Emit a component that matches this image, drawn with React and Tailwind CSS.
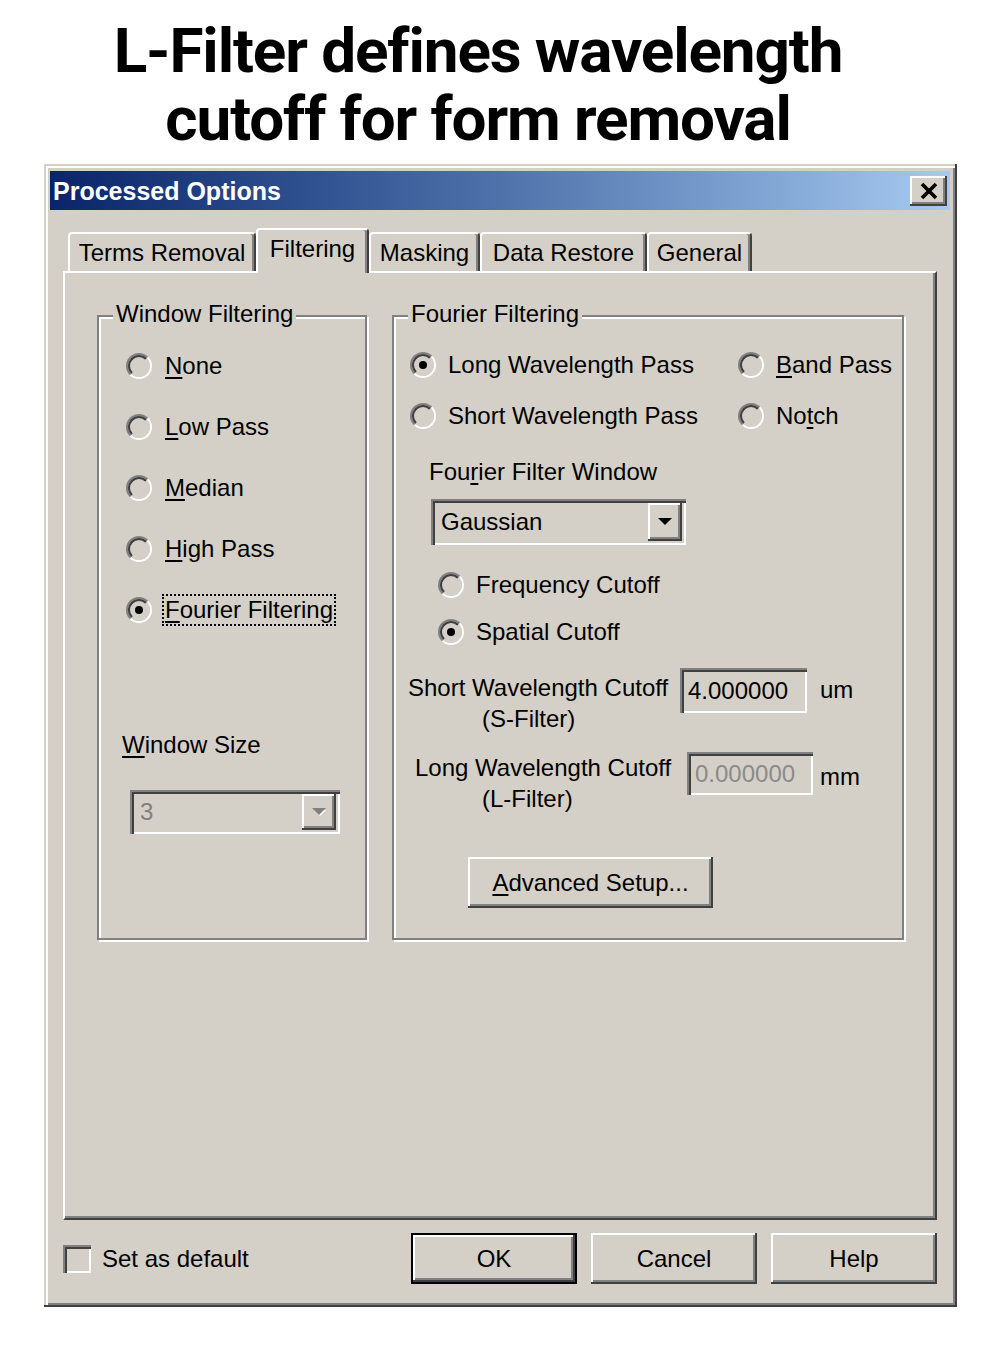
const ui = "font-['Liberation_Sans',Arial,sans-serif] text-[24px] leading-[28px] text-black";
const raised = "shadow-[inset_-2px_-2px_0_#404040,inset_2px_2px_0_#ffffff,inset_-4px_-4px_0_#808080]";
const sunken = "shadow-[inset_2px_2px_0_#808080,inset_4px_4px_0_#404040,inset_-2px_-2px_0_#ffffff,inset_-4px_-4px_0_#d4d0c8]";

function Radio({ checked }) {
  return (
    <span className="flex h-[26px] w-[26px] shrink-0 rounded-full border-2 border-t-[#808080] border-l-[#808080] border-b-white border-r-white">
      <span className="flex h-full w-full items-center justify-center rounded-full border-2 border-t-[#404040] border-l-[#404040] border-b-[#d4d0c8] border-r-[#d4d0c8] bg-[#d4d0c8]">
        {checked && <span className="h-[8px] w-[8px] rounded-full bg-black" />}
      </span>
    </span>
  );
}

function U({ children }) {
  return <span className="underline decoration-[2px] underline-offset-[3px]">{children}</span>;
}

function Arrow({ disabled }) {
  return (
    <svg width="16" height="10" viewBox="0 0 16 10">
      {disabled && <path d="M3 3h12l-6 6z" fill="#ffffff" />}
      <path d="M1 1h14l-7 7z" fill={disabled ? "#808080" : "#000000"} />
    </svg>
  );
}

function Combo({ value, disabled, className }) {
  return (
    <div className={`flex bg-[#d4d0c8] p-[4px] ${sunken} ${className}`}>
      <div className={`flex flex-1 items-center pl-[6px] ${disabled ? "text-[#808080]" : "text-black"}`}>{value}</div>
      <div className={`flex w-[34px] items-center justify-center bg-[#d4d0c8] ${raised}`}>
        <Arrow disabled={disabled} />
      </div>
    </div>
  );
}

function Button({ children, className, isDefault }) {
  return (
    <div className={`${isDefault ? "border-2 border-black" : ""} ${className}`}>
      <div className={`flex h-full w-full items-center justify-center bg-[#d4d0c8] ${raised}`}>{children}</div>
    </div>
  );
}

function Tab({ label, w, active }) {
  if (active) {
    return (
      <div className={`relative z-10 -mb-[2px] flex h-[45px] ${w} justify-center rounded-t-[4px] border-t-2 border-l-2 border-r-2 border-t-white border-l-white border-r-[#404040] bg-[#d4d0c8] pt-[5px] shadow-[inset_-2px_0_0_#808080]`}>
        {label}
      </div>
    );
  }
  return (
    <div className={`flex h-[39px] ${w} justify-center rounded-t-[4px] border-t-2 border-l-2 border-r-2 border-t-white border-l-white border-r-[#404040] bg-[#d4d0c8] pt-[5px] shadow-[inset_-2px_0_0_#808080]`}>
      {label}
    </div>
  );
}

function Group({ title, className, children }) {
  return (
    <div className={`relative border-2 border-[#808080] shadow-[2px_2px_0_#ffffff,inset_2px_2px_0_#ffffff] ${className}`}>
      <span className="absolute left-[14px] top-[-17px] bg-[#d4d0c8] px-[3px] leading-[28px]">{title}</span>
      {children}
    </div>
  );
}

function LeftRadio({ checked, focus, children }) {
  return (
    <div className="flex items-center">
      <Radio checked={checked} />
      <span className={`ml-[10px] border-2 px-[1px] ${focus ? "border-dotted border-black" : "border-transparent"}`}>{children}</span>
    </div>
  );
}

function RightRadio({ checked, children, className }) {
  return (
    <div className={`flex items-center ${className}`}>
      <Radio checked={checked} />
      <span className="ml-[12px]">{children}</span>
    </div>
  );
}

export default function App() {
  return (
    <div className="min-h-[1362px] w-[1000px] bg-white">
      <div className="w-[956px] pt-[17px] pb-[11px] text-center font-['Roboto',sans-serif] text-[62px] font-bold leading-[68px] tracking-[-1.1px] text-black">
        <div>L-Filter defines wavelength</div>
        <div>cutoff for form removal</div>
      </div>

      <div className={`ml-[44px] h-[1143px] w-[913px] bg-[#d4d0c8] pt-[7px] pl-[6px] pr-[7px] ${ui} shadow-[inset_-2px_-2px_0_#404040,inset_2px_2px_0_#d4d0c8,inset_4px_4px_0_#ffffff,inset_-4px_-4px_0_#808080]`}>
        {/* title bar */}
        <div className="flex h-[39px] items-center justify-between bg-linear-to-r from-[#0a246a] via-[#4f72ab] to-[#a6caf0] pl-[3px] pr-[3px]">
          <span className="text-[25px] font-bold text-white">Processed Options</span>
          <div className={`flex h-[30px] w-[37px] items-center justify-center bg-[#d4d0c8] ${raised}`}>
            <svg width="20" height="18" viewBox="0 0 20 18">
              <path d="M3 2l14 14M17 2L3 16" stroke="#000000" strokeWidth="3.6" />
            </svg>
          </div>
        </div>

        <div className="mx-[13px] mt-[18px]">
          {/* tabs */}
          <div className="flex h-[43px] items-end pl-[5px]">
            <Tab label="Terms Removal" w="w-[188px]" />
            <Tab label="Filtering" w="w-[113px]" active />
            <Tab label="Masking" w="w-[111px]" />
            <Tab label="Data Restore" w="w-[167px]" />
            <Tab label="General" w="w-[105px]" />
          </div>

          {/* tab panel */}
          <div className="flex h-[949px] gap-[25px] border-t-2 border-l-2 border-r-2 border-b-2 border-t-white border-l-white border-r-[#404040] border-b-[#404040] pt-[42px] pl-[32px] shadow-[inset_-2px_-2px_0_#808080]">
            <Group title="Window Filtering" className="h-[625px] w-[270px]">
              <div className="ml-[27px] mt-[33px] flex flex-col gap-[29px]">
                <LeftRadio><U>N</U>one</LeftRadio>
                <LeftRadio><U>L</U>ow Pass</LeftRadio>
                <LeftRadio><U>M</U>edian</LeftRadio>
                <LeftRadio><U>H</U>igh Pass</LeftRadio>
                <LeftRadio checked focus><U>F</U>ourier Filtering</LeftRadio>
              </div>
              <div className="ml-[23px] mt-[105px]"><U>W</U>indow Size</div>
              <Combo value="3" disabled className="ml-[31px] mt-[31px] h-[44px] w-[210px]" />
            </Group>

            <Group title="Fourier Filtering" className="h-[625px] w-[512px]">
              <div className="ml-[16px] mt-[34px] flex">
                <RightRadio checked className="w-[328px]">Long Wavelength Pass</RightRadio>
                <RightRadio><U>B</U>and Pass</RightRadio>
              </div>
              <div className="ml-[16px] mt-[23px] flex">
                <RightRadio className="w-[328px]">Short Wavelength Pass</RightRadio>
                <RightRadio>No<U>t</U>ch</RightRadio>
              </div>
              <div className="ml-[35px] mt-[28px]">Fou<U>r</U>ier Filter Window</div>
              <Combo value="Gaussian" className="ml-[37px] mt-[13px] h-[46px] w-[255px]" />
              <RightRadio className="ml-[44px] mt-[26px]">Frequency Cutoff</RightRadio>
              <RightRadio checked className="ml-[44px] mt-[19px]">Spatial Cutoff</RightRadio>

              <div className="ml-[14px] mt-[22px] flex items-start">
                <div className="mt-[4px] flex w-[272px] flex-col leading-[31px]">
                  <span>Short Wavelength Cutoff</span>
                  <span className="pl-[74px]">(S-Filter)</span>
                </div>
                <div className={`flex h-[45px] w-[127px] items-center bg-[#d4d0c8] pl-[8px] ${sunken}`}>4.000000</div>
                <span className="ml-[13px] mt-[8px]">um</span>
              </div>

              <div className="ml-[21px] mt-[18px] flex items-start">
                <div className="flex w-[272px] flex-col leading-[31px]">
                  <span>Long Wavelength Cutoff</span>
                  <span className="pl-[67px]">(L-Filter)</span>
                </div>
                <div className={`flex h-[43px] w-[126px] items-center bg-[#d4d0c8] pl-[8px] text-[#8a8a8a] ${sunken}`}>0.000000</div>
                <span className="ml-[7px] mt-[11px]">mm</span>
              </div>

              <Button className="ml-[74px] mt-[43px] h-[51px] w-[245px]"><U>A</U>dvanced Setup...</Button>
            </Group>
          </div>

          {/* bottom row */}
          <div className="mt-[13px] flex h-[51px] items-center">
            <div className={`h-[28px] w-[28px] bg-[#d4d0c8] ${sunken}`} />
            <span className="ml-[11px]">Set as default</span>
            <div className="ml-auto flex gap-[14px]">
              <Button isDefault className="h-[51px] w-[166px]">OK</Button>
              <Button className="h-[51px] w-[166px]">Cancel</Button>
              <Button className="h-[51px] w-[166px]">Help</Button>
            </div>
          </div>
        </div>
      </div>
    </div>
  );
}
